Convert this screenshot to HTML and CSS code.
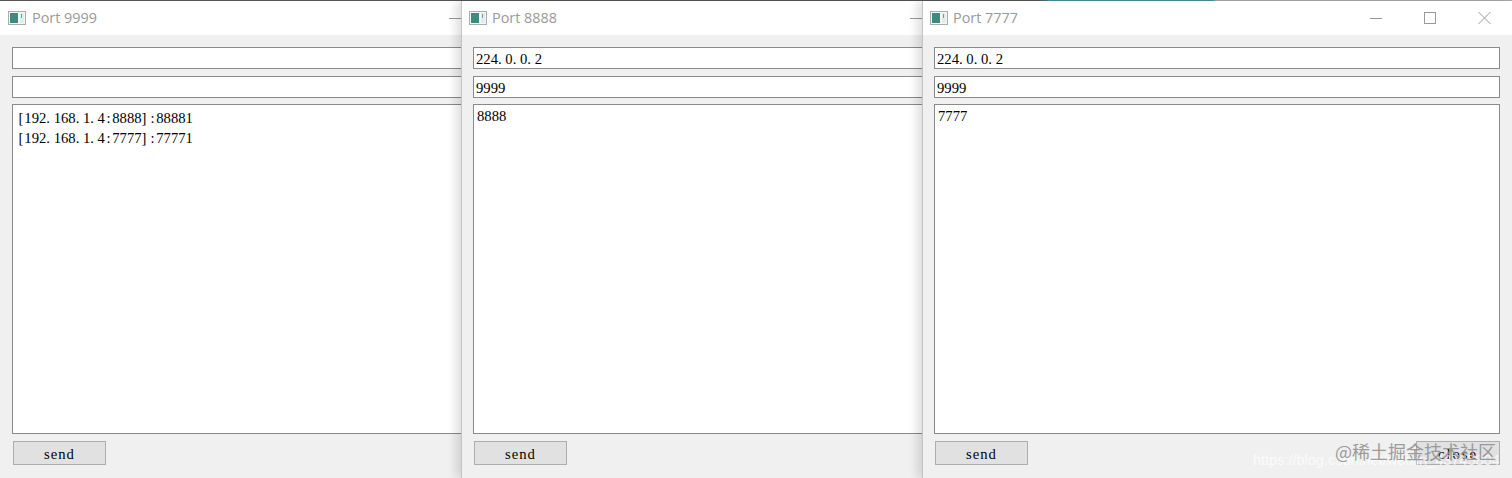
FILE: index.html
```html
<!DOCTYPE html>
<html lang="en">
<head>
<meta charset="utf-8">
<title>Port windows</title>
<link rel="stylesheet" href="styles.css">
</head>
<body>
<div class="topline"></div>
<main class="desktop">
  <section class="window win-first">
    <header class="titlebar">
      <svg class="appicon" viewBox="0 0 18 14" width="18" height="14"><rect x=".5" y=".5" width="17" height="13" fill="#f4f6f5" stroke="#a9adac"/><rect x="2" y="2" width="8" height="10" fill="#3c8a80"/><rect x="12" y="2" width="4" height="10" fill="#dfeeea"/><rect x="13" y="3" width="1" height="4" fill="#7c9a94"/></svg>
      <span class="title">Port 9999</span>
      <div class="controls">
        <svg class="ctl" viewBox="0 0 12 12" width="12" height="12"><path d="M0 6.5h12" stroke="#999" fill="none"/></svg>
      </div>
    </header>
    <div class="content">
      <div class="field"></div>
      <div class="field"></div>
      <div class="log log-multi"><div><i class="open">[</i>192<i>.</i>168<i>.</i>1<i>.</i>4<i class="mid">:</i>8888<i>]</i><i class="mid">:</i>88881</div><div><i class="open">[</i>192<i>.</i>168<i>.</i>1<i>.</i>4<i class="mid">:</i>7777<i>]</i><i class="mid">:</i>77771</div></div>
      <div class="footer"><button class="btn">send</button></div>
    </div>
  </section>
  <section class="window">
    <header class="titlebar">
      <svg class="appicon" viewBox="0 0 18 14" width="18" height="14"><rect x=".5" y=".5" width="17" height="13" fill="#f4f6f5" stroke="#a9adac"/><rect x="2" y="2" width="8" height="10" fill="#3c8a80"/><rect x="12" y="2" width="4" height="10" fill="#dfeeea"/><rect x="13" y="3" width="1" height="4" fill="#7c9a94"/></svg>
      <span class="title">Port 8888</span>
      <div class="controls">
        <svg class="ctl" viewBox="0 0 12 12" width="12" height="12"><path d="M0 6.5h12" stroke="#999" fill="none"/></svg>
      </div>
    </header>
    <div class="content">
      <div class="field">224<i>.</i>0<i>.</i>0<i>.</i>2</div>
      <div class="field">9999</div>
      <div class="log">8888</div>
      <div class="footer"><button class="btn">send</button></div>
    </div>
  </section>
  <section class="window win-last">
    <header class="titlebar">
      <svg class="appicon" viewBox="0 0 18 14" width="18" height="14"><rect x=".5" y=".5" width="17" height="13" fill="#f4f6f5" stroke="#a9adac"/><rect x="2" y="2" width="8" height="10" fill="#3c8a80"/><rect x="12" y="2" width="4" height="10" fill="#dfeeea"/><rect x="13" y="3" width="1" height="4" fill="#7c9a94"/></svg>
      <span class="title">Port 7777</span>
      <div class="controls">
        <svg class="ctl" viewBox="0 0 12 12" width="12" height="12"><path d="M0 6.5h12" stroke="#999" fill="none"/></svg>
        <svg class="ctl" viewBox="0 0 12 12" width="12" height="12"><rect x=".5" y=".5" width="11" height="11" fill="none" stroke="#999"/></svg>
        <svg class="ctl" viewBox="0 0 12 12" width="12" height="12"><path d="M0 0l12 12M12 0L0 12" stroke="#999" fill="none"/></svg>
      </div>
    </header>
    <div class="content">
      <div class="field">224<i>.</i>0<i>.</i>0<i>.</i>2</div>
      <div class="field">9999</div>
      <div class="log">7777</div>
      <div class="footer"><button class="btn">send</button><button class="btn btn-close">close</button></div>
    </div>
    <div class="mark-url">https://blog.csdn.net/weixin_43745804</div>
    <div class="mark-brand">@稀土掘金技术社区</div>
  </section>
</main>
</body>
</html>
```
FILE: styles.css
```css
* { box-sizing: border-box; }
html, body { margin: 0; padding: 0; }
body {
  width: 1512px;
  height: 478px;
  overflow: hidden;
  background: #f0f0f0;
  font-family: "Liberation Serif", serif;
}
.topline {
  height: 1px;
  background: linear-gradient(90deg, #555 0, #555 1040px, #4a8fa3 1050px, #4a8fa3 1213px, #aaa 1216px, #aaa 100%);
}
.desktop {
  display: flex;
  height: 477px;
}
.window {
  position: relative;
  flex: 0 0 461px;
  width: 461px;
  overflow: hidden;
  background: #f0f0f0;
  box-shadow: -5px 0 9px rgba(0, 0, 0, .13);
  border-left: 1px solid #c4c4c4;
}
.win-first { border-left: 0; box-shadow: none; }
.win-last { flex: 0 0 590px; width: 590px; }
.titlebar {
  display: flex;
  align-items: center;
  height: 34px;
  width: 590px;
  padding-left: 7px;
  background: #fff;
}
.win-first .titlebar { padding-left: 8px; }
.appicon { flex: none; margin-right: 5px; }
.win-first .appicon { margin-right: 6px; }
.title {
  font-family: "Open Sans", "Noto Sans", sans-serif;
  font-size: 14.4px;
  line-height: 18px;
  margin-top: -1px;
  color: #9a9a9a;
}
.controls {
  position: absolute;
  left: 448px;
  top: 11px;
  display: flex;
  gap: 42px;
}
.win-first .controls { left: 449px; }
.win-last .controls { left: 447px; }
.ctl { flex: none; display: block; }
.ctl + .ctl + .ctl { width: 13px; }
.content {
  display: flex;
  flex-direction: column;
  width: 566px;
  margin-left: 11px;
  padding-top: 12px;
}
.win-first .content { margin-left: 12px; }
.field, .log {
  background: #fff;
  border: 1px solid #8a8a8a;
  color: #000;
  font-size: 14.67px;
}
.field i, .log i {
  display: inline-block;
  width: 7.33px;
  font-style: normal;
}
.log i.open { text-align: right; padding-right: 1px; }
.log i.mid { text-align: center; }
.field {
  height: 22px;
  line-height: 23px;
  padding-left: 2px;
  margin-bottom: 7px;
}
.field + .field { margin-bottom: 6px; }
.log {
  height: 330px;
  padding: 3px 3px;
  line-height: 16px;
}
.log-multi {
  padding-top: 3px;
  padding-left: 4px;
  line-height: 20px;
}
.footer {
  display: flex;
  justify-content: space-between;
  margin-top: 7px;
  padding: 0 1px;
}
.btn {
  width: 93px;
  height: 24px;
  padding: 2px 0 0;
  background: #e1e1e1;
  border: 1px solid #adadad;
  color: #000;
  font-family: "Liberation Serif", serif;
  font-size: 14.67px;
  letter-spacing: 1px;
}
.btn-close { width: 84px; margin-right: -1px; letter-spacing: 2px; }
.mark-url {
  position: absolute;
  left: 330px;
  top: 451px;
  font-family: "Liberation Sans", sans-serif;
  font-size: 14.5px;
  color: #fff;
  opacity: .75;
  white-space: nowrap;
}
.mark-brand {
  position: absolute;
  left: 412px;
  top: 437px;
  font-family: "Noto Sans CJK SC", "Noto Sans", sans-serif;
  font-size: 18px;
  line-height: 26px;
  color: #8d8d8d;
  opacity: .85;
  white-space: nowrap;
}
```
